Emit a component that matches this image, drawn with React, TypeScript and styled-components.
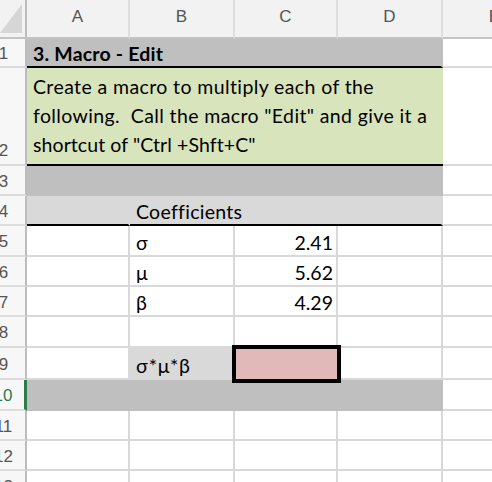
import React, { useLayoutEffect, useRef } from 'react';
import styled, { createGlobalStyle } from 'styled-components';

const GlobalStyle = createGlobalStyle`
    html, body {
        margin: 0;
        padding: 0;
        background: #ffffff;
        overflow: hidden;
    }
`;

const COLUMNS = "45px 103px 105px 103px 105px 105px";
const GRID = "#d9d9d9";
const BODY_FONT = `"Lato", "Open Sans", "Noto Sans", sans-serif`;

const Sheet = styled.div`
    margin-left: -18px;
    display: flex;
    flex-direction: column;
`;

const Row = styled.div<{ $h: number }>`
    display: grid;
    grid-template-columns: ${COLUMNS};
    height: ${(p) => p.$h}px;
`;

const Corner = styled.div`
    box-sizing: border-box;
    background: #f2f2f2;
    border-right: 2px solid #bdbdbd;
    border-bottom: 2px solid #c4c4c4;
    display: flex;
    justify-content: flex-end;
    align-items: flex-start;
    padding: 4px 3px 0 0;
`;

const ColHead = styled.div`
    box-sizing: border-box;
    background: #f2f2f2;
    border-right: 2px solid #dedede;
    border-bottom: 2px solid #c4c4c4;
    display: flex;
    align-items: center;
    justify-content: center;
    padding-bottom: 3px;
    font-family: "Liberation Sans", Arial, sans-serif;
    font-size: 17px;
    color: #555555;
`;

const RowHead = styled.div<{ $active?: boolean; $bottom?: boolean }>`
    box-sizing: border-box;
    background: #f7f7f7;
    border-bottom: 2px solid #dcdcdc;
    border-right: ${(p) => (p.$active ? '3px solid #2f7a4a' : '2px solid #bdbdbd')};
    display: flex;
    align-items: ${(p) => (p.$bottom ? 'flex-end' : 'center')};
    justify-content: center;
    padding: ${(p) => (p.$bottom ? '0 0 3px' : '3px 0 0')};
    font-family: "Liberation Sans", Arial, sans-serif;
    font-size: 17px;
    color: ${(p) => (p.$active ? '#2f7a4a' : '#555555')};
`;

const Cell = styled.div<{
    $fill?: string;
    $span?: number;
    $rule?: boolean;
    $right?: boolean;
}>`
    box-sizing: border-box;
    grid-column: span ${(p) => p.$span || 1};
    background: ${(p) => p.$fill || '#ffffff'};
    border-right: 2px solid ${(p) => p.$fill || GRID};
    border-bottom: 2px solid ${(p) => (p.$rule ? '#000000' : p.$fill || GRID)};
    display: flex;
    align-items: flex-end;
    justify-content: ${(p) => (p.$right ? 'flex-end' : 'flex-start')};
    padding: 0 3px 1px 6px;
    font-family: ${BODY_FONT};
    font-size: 19.5px;
    color: #000000;
    white-space: nowrap;
`;

const Note = styled.div`
    box-sizing: border-box;
    grid-column: span 4;
    display: flex;
    flex-direction: column;
    align-items: flex-start;
    background: #d8e4bc;
    border-bottom: 2px solid #000000;
    padding: 4px 0 0 6px;
    font-family: ${BODY_FONT};
    font-size: 19.5px;
    line-height: 29px;
    white-space: pre;
    color: #000000;
`;

const Result = styled(Cell)`
    position: relative;
    z-index: 1;
    outline: 4px solid #000000;
    outline-offset: -1px;
`;

const Fit = styled.span<{ $bold?: boolean }>`
    display: inline-block;
    white-space: pre;
    font-weight: ${(p) => (p.$bold ? 700 : 400)};
`;

// stretches a text run to the width it has in the sheet (Calibri is wider than Lato)
const FitText = ({ width, bold, children }: { width: number; bold?: boolean; children: string }) => {
    const ref = useRef<HTMLSpanElement>(null);

    useLayoutEffect(() => {
        const fit = () => {
            const el = ref.current;
            if (!el) return;
            el.style.letterSpacing = '0px';
            el.style.marginRight = '0px';
            const natural = el.getBoundingClientRect().width;
            const gaps = Math.max(children.length - 1, 1);
            const spacing = (width - natural) / gaps;
            el.style.letterSpacing = `${spacing}px`;
            el.style.marginRight = `${-spacing}px`;
        };
        fit();
        document.fonts?.ready.then(fit);
        const t = window.setTimeout(fit, 50);
        return () => window.clearTimeout(t);
    }, [width, children]);

    return (
        <Fit ref={ref} $bold={bold}>
            {children}
        </Fit>
    );
};

const GRAY = "#bfbfbf";
const LIGHT = "#d9d9d9";
const PINK = "#e0b9b8";

const coefficients = [
    { n: 5, sym: "σ", value: "2.41", h: 31 },
    { n: 6, sym: "μ", value: "5.62", h: 30 },
    { n: 7, sym: "β", value: "4.29", h: 30 },
];

const Blank = ({ n, h }: { n: number; h: number }) => (
    <Row $h={h}>
        <RowHead>{n}</RowHead>
        <Cell />
        <Cell />
        <Cell />
        <Cell />
        <Cell />
    </Row>
);

const App = () => {
    return (
        <>
            <GlobalStyle />
            <Sheet>
                <Row $h={39}>
                    <Corner>
                        <svg width="22" height="29" viewBox="0 0 22 29">
                            <polygon points="22,0 22,29 0,29" fill="#d6d6d6" />
                        </svg>
                    </Corner>
                    <ColHead>A</ColHead>
                    <ColHead>B</ColHead>
                    <ColHead>C</ColHead>
                    <ColHead>D</ColHead>
                    <ColHead>E</ColHead>
                </Row>

                <Row $h={29}>
                    <RowHead>1</RowHead>
                    <Cell $fill={GRAY} $span={4} $rule>
                        <FitText width={130} bold>3. Macro - Edit</FitText>
                    </Cell>
                    <Cell />
                </Row>

                <Row $h={98}>
                    <RowHead $bottom>2</RowHead>
                    <Note>
                        <FitText width={341}>Create a macro to multiply each of the</FitText>
                        <FitText width={394}>{'following.  Call the macro "Edit" and give it a'}</FitText>
                        <FitText width={222}>{'shortcut of "Ctrl +Shft+C"'}</FitText>
                    </Note>
                    <Cell />
                </Row>

                <Row $h={30}>
                    <RowHead>3</RowHead>
                    <Cell $fill={GRAY} $span={4} />
                    <Cell />
                </Row>

                <Row $h={30}>
                    <RowHead>4</RowHead>
                    <Cell $fill={LIGHT} $rule />
                    <Cell $fill={LIGHT} $span={3} $rule>
                        <FitText width={105}>Coefficients</FitText>
                    </Cell>
                    <Cell />
                </Row>

                {coefficients.map((c) => (
                    <Row $h={c.h} key={c.n}>
                        <RowHead>{c.n}</RowHead>
                        <Cell />
                        <Cell>{c.sym}</Cell>
                        <Cell $right>{c.value}</Cell>
                        <Cell />
                        <Cell />
                    </Row>
                ))}

                <Blank n={8} h={31} />

                <Row $h={32}>
                    <RowHead>9</RowHead>
                    <Cell />
                    <Cell $fill={LIGHT}>
                        <FitText width={54}>σ*μ*β</FitText>
                    </Cell>
                    <Result $fill={PINK} />
                    <Cell />
                    <Cell />
                </Row>

                <Row $h={31}>
                    <RowHead $active>10</RowHead>
                    <Cell $fill={GRAY} $span={4} />
                    <Cell />
                </Row>

                <Blank n={11} h={30} />
                <Blank n={12} h={30} />
                <Blank n={13} h={30} />
            </Sheet>
        </>
    );
};

export default App;
